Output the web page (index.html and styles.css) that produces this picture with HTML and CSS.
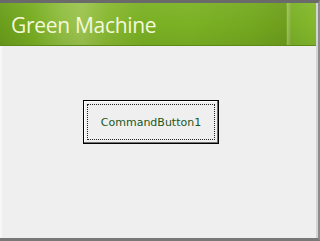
FILE: index.html
```html
<!DOCTYPE html>
<html>
<head>
<meta charset="utf-8">
<link rel="stylesheet" href="styles.css">
</head>
<body>
<div class="window">
  <div class="main">
    <div class="header">
      <span class="title">Green Machine</span>
    </div>
    <div class="content">
      <div class="button"><div class="focus">CommandButton1</div></div>
    </div>
  </div>
</div>
</body>
</html>
```
FILE: styles.css
```css
html, body { margin: 0; padding: 0; }
body { width: 320px; height: 241px; overflow: hidden; background: #efefef; }
.window {
  width: 320px; height: 241px; box-sizing: border-box;
  border-top: 3px solid #6a6a6a;
  border-bottom: 3px solid #787878;
  border-right: 2px solid #8c8c8c;
  display: flex;
}
.main {
  flex: 1; display: flex; flex-direction: column;
  border-right: 2px solid #d4d4d4;
  border-left: 2px solid #f7f7f7;
  background: #efefef;
}
.header {
  height: 43px; box-sizing: border-box;
  margin-left: -2px;
  display: flex; align-items: center;
  border-bottom: 1px solid #5c8a18;
  background:
    linear-gradient(180deg, rgba(255,255,255,0.05) 0%, rgba(255,255,255,0) 50%, rgba(0,0,0,0.06) 100%),
    linear-gradient(90deg, #6a9d1c 0%, #78ad22 10%, #92bf44 20%, #9cc450 26%, #88b832 34%, #7ab024 45%, #7bb224 60%, #74a820 80%, #6d9e1c 90.6%, #a2c060 90.9%, #7bb028 92.2%, #84b92c 100%);
}
.title {
  font-family: "Open Sans", "DejaVu Sans", sans-serif;
  font-size: 21px; color: #f4f8dc;
  padding-left: 11px; letter-spacing: -0.3px;
  margin-top: 2px;
}
.content { flex: 1; padding: 54px 0 0 81px; }
.button {
  width: 136px; height: 44px; box-sizing: border-box;
  border: 1px solid #000;
  box-shadow: inset -1px -1px 0 #707070, inset 1px 1px 0 #ffffff;
  background: #efefef;
  padding: 3px;
}
.focus {
  height: 100%; box-sizing: border-box;
  border: 1px dotted #222;
  display: flex; align-items: center; justify-content: center;
  font-family: "DejaVu Sans", sans-serif; font-size: 11px; color: #1b561b;
  padding-top: 1px;
}
```
